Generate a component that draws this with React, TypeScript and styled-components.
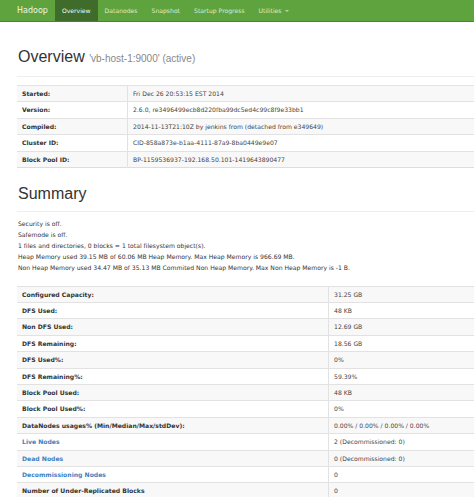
import styled, { createGlobalStyle } from "styled-components";

const GlobalStyle = createGlobalStyle`
  html, body {
    margin: 0;
    padding: 0;
    background: #fff;
  }
  body {
    font-family: "DejaVu Sans", Verdana, sans-serif;
    font-size: 6.1px;
    color: #333;
    overflow: hidden;
  }
`;

const NavBar = styled.div`
  height: 21px;
  background-color: #5fa33e;
  border-bottom: 1px solid #4b8431;
  display: flex;
  align-items: stretch;
  padding-left: 10px;
`;

const Brand = styled.div`
  display: flex;
  align-items: center;
  padding: 0 7px;
  font-size: 8px;
  color: #eef5e9;
`;

const NavItem = styled.div<{ $active?: boolean }>`
  display: flex;
  align-items: center;
  gap: 3px;
  padding: 0 7px;
  font-size: 6.1px;
  color: ${(p) => (p.$active ? "#f2f6ef" : "#dcebd2")};
  background-color: ${(p) => (p.$active ? "#3f6c2b" : "transparent")};
`;

const Caret = styled.span`
  width: 0;
  height: 0;
  border-left: 2px solid transparent;
  border-right: 2px solid transparent;
  border-top: 2px solid #b9d8a8;
`;

const Container = styled.div`
  padding: 9px 0 0 17px;
`;

const PageHeader = styled.div`
  margin: 17px 0 8px 0;
  padding-bottom: 8px;
  border-bottom: 1px solid #eee;
`;

const Title = styled.h1`
  margin: 0;
  padding-left: 1px;
  font-family: "Liberation Sans", Arial, sans-serif;
  font-weight: 400;
  font-size: 16px;
  line-height: 18px;
  color: #333;

  small {
    font-size: 10px;
    color: #888;
  }
`;

const Para = styled.p`
  margin: 0 0 2.4px 0;
  padding-left: 1px;
  line-height: 8.6px;
  color: #333;
`;

const Paras = styled.div`
  margin-bottom: 13px;
`;

const Table = styled.table`
  width: 100%;
  border-collapse: collapse;
  border-bottom: 1px solid #ddd;

  tr:nth-child(odd) td {
    background-color: #f8f8f8;
  }
`;

const Label = styled.td<{ $width: number }>`
  width: ${(p) => p.$width}px;
  padding: 0 5px;
  height: 15.4px;
  line-height: 15.4px;
  font-weight: bold;
  border-top: 1px solid #e2e2e2;
  white-space: nowrap;
`;

const Value = styled.td`
  padding: 0 5px;
  height: 15.4px;
  line-height: 15.4px;
  border-top: 1px solid #e2e2e2;
  border-left: 1px solid #e2e2e2;
  color: #444;
  white-space: nowrap;
`;

const Link = styled.a`
  color: #3f7fbe;
  text-decoration: none;
`;

type Row = { label: string; value: string; link?: boolean };

const overview: Row[] = [
  { label: "Started:", value: "Fri Dec 26 20:53:15 EST 2014" },
  { label: "Version:", value: "2.6.0, re3496499ecb8d220fba99dc5ed4c99c8f9e33bb1" },
  { label: "Compiled:", value: "2014-11-13T21:10Z by jenkins from (detached from e349649)" },
  { label: "Cluster ID:", value: "CID-858a873e-b1aa-4111-87a9-8ba0449e9e07" },
  { label: "Block Pool ID:", value: "BP-1159536937-192.168.50.101-1419643890477" },
];

const summary: Row[] = [
  { label: "Configured Capacity:", value: "31.25 GB" },
  { label: "DFS Used:", value: "48 KB" },
  { label: "Non DFS Used:", value: "12.69 GB" },
  { label: "DFS Remaining:", value: "18.56 GB" },
  { label: "DFS Used%:", value: "0%" },
  { label: "DFS Remaining%:", value: "59.39%" },
  { label: "Block Pool Used:", value: "48 KB" },
  { label: "Block Pool Used%:", value: "0%" },
  { label: "DataNodes usages% (Min/Median/Max/stdDev):", value: "0.00% / 0.00% / 0.00% / 0.00%" },
  { label: "Live Nodes", value: "2 (Decommissioned: 0)", link: true },
  { label: "Dead Nodes", value: "0 (Decommissioned: 0)", link: true },
  { label: "Decommissioning Nodes", value: "0", link: true },
  { label: "Number of Under-Replicated Blocks", value: "0" },
];

const notes = [
  "Security is off.",
  "Safemode is off.",
  "1 files and directories, 0 blocks = 1 total filesystem object(s).",
  "Heap Memory used 39.15 MB of 60.06 MB Heap Memory. Max Heap Memory is 966.69 MB.",
  "Non Heap Memory used 34.47 MB of 35.13 MB Commited Non Heap Memory. Max Non Heap Memory is -1 B.",
];

function InfoTable({ rows, labelWidth }: { rows: Row[]; labelWidth: number }) {
  return (
    <Table>
      <tbody>
        {rows.map((r) => (
          <tr key={r.label}>
            <Label $width={labelWidth}>
              {r.link ? <Link href="#">{r.label}</Link> : r.label}
            </Label>
            <Value>{r.value}</Value>
          </tr>
        ))}
      </tbody>
    </Table>
  );
}

export default function App() {
  return (
    <>
      <GlobalStyle />
      <NavBar>
        <Brand>Hadoop</Brand>
        <NavItem $active>Overview</NavItem>
        <NavItem>Datanodes</NavItem>
        <NavItem>Snapshot</NavItem>
        <NavItem>Startup Progress</NavItem>
        <NavItem>
          Utilities <Caret />
        </NavItem>
      </NavBar>
      <Container>
        <PageHeader>
          <Title>
            Overview <small>'vb-host-1:9000' (active)</small>
          </Title>
        </PageHeader>
        <InfoTable rows={overview} labelWidth={100} />
        <PageHeader>
          <Title>Summary</Title>
        </PageHeader>
        <Paras>
          {notes.map((n) => (
            <Para key={n}>{n}</Para>
          ))}
        </Paras>
        <InfoTable rows={summary} labelWidth={301} />
      </Container>
    </>
  );
}
